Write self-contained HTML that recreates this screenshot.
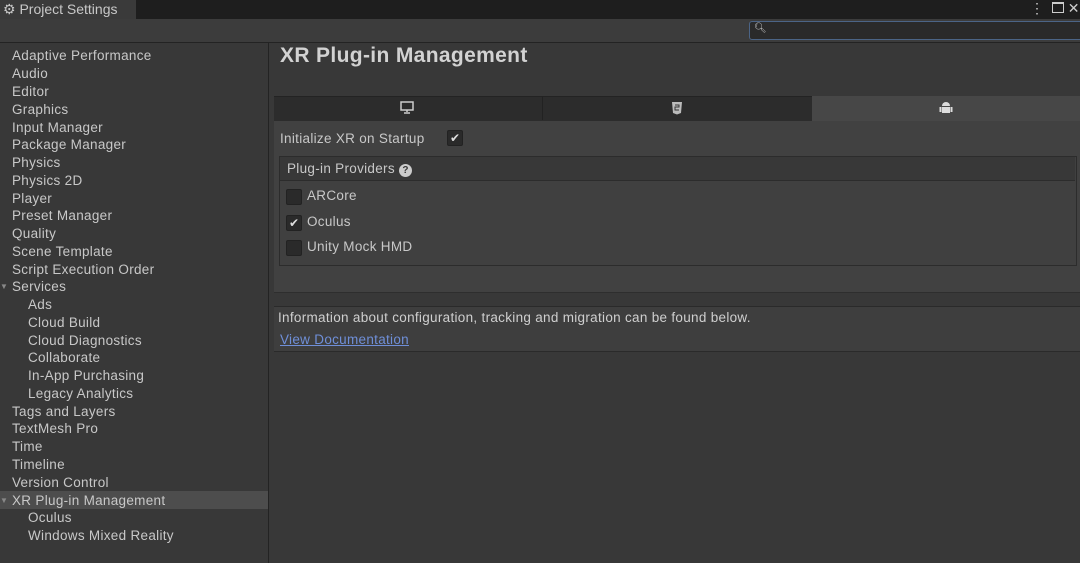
<!DOCTYPE html><html><head><style>
body{margin:0;width:1080px;height:563px;background:#383838;font-family:"Liberation Sans",sans-serif;color:#c8c8c8;position:relative;overflow:hidden;font-size:13.5px;letter-spacing:0.3px}
.a{position:absolute;white-space:nowrap}
.it{position:absolute;left:12px;font-size:13.5px;line-height:18px;white-space:nowrap}
.cb{position:absolute;width:14px;height:14px;background:#2a2a2a;border:1px solid #222;border-radius:2px;letter-spacing:0}
</style></head><body>
<div class="a" style="left:0;top:0;width:1080px;height:19px;background:#1e1e1e"></div>
<div class="a" style="left:0;top:0;width:136px;height:19px;background:#3a3a3a"></div>
<div class="a" style="left:3px;top:0;line-height:19px;font-size:14px;color:#c8c8c8;letter-spacing:0">⚙ Project Settings</div>
<div class="a" style="left:1030px;top:0;line-height:16px;font-size:14px;color:#ccc;letter-spacing:0">⋮ <span style="display:inline-block;width:10px;height:8px;border:1px solid #ccc;border-top-width:2px;margin-left:4px"></span> ✕</div>
<div class="a" style="left:0;top:19px;width:1080px;height:23px;background:#3c3c3c;border-bottom:1px solid #232323"></div>
<div class="a" style="left:749px;top:21px;width:340px;height:17px;background:#2a2a2a;border:1px solid #4b6486;border-radius:3px"></div>
<div class="a" style="left:754px;top:23px;font-size:10px;color:#ccc">🔍︎</div>
<div class="a" style="left:268px;top:43px;width:1px;height:520px;background:#232323"></div>
<div class="a" style="left:0;top:491px;width:268px;height:18px;background:#4d4d4d"></div>
<div class="it" style="top:47px">Adaptive Performance</div>
<div class="it" style="top:65px">Audio</div>
<div class="it" style="top:83px">Editor</div>
<div class="it" style="top:101px">Graphics</div>
<div class="it" style="top:119px">Input Manager</div>
<div class="it" style="top:136px">Package Manager</div>
<div class="it" style="top:154px">Physics</div>
<div class="it" style="top:172px">Physics 2D</div>
<div class="it" style="top:190px">Player</div>
<div class="it" style="top:207px">Preset Manager</div>
<div class="it" style="top:225px">Quality</div>
<div class="it" style="top:243px">Scene Template</div>
<div class="it" style="top:261px">Script Execution Order</div>
<div class="it" style="top:278px">Services</div>
<div class="it" style="top:278px;left:0;font-size:8px;color:#888">▼</div>
<div class="it" style="top:296px;left:28px">Ads</div>
<div class="it" style="top:314px;left:28px">Cloud Build</div>
<div class="it" style="top:332px;left:28px">Cloud Diagnostics</div>
<div class="it" style="top:349px;left:28px">Collaborate</div>
<div class="it" style="top:367px;left:28px">In-App Purchasing</div>
<div class="it" style="top:385px;left:28px">Legacy Analytics</div>
<div class="it" style="top:403px">Tags and Layers</div>
<div class="it" style="top:420px">TextMesh Pro</div>
<div class="it" style="top:438px">Time</div>
<div class="it" style="top:456px">Timeline</div>
<div class="it" style="top:474px">Version Control</div>
<div class="it" style="top:492px">XR Plug-in Management</div>
<div class="it" style="top:492px;left:0;font-size:8px;color:#888">▼</div>
<div class="it" style="top:509px;left:28px">Oculus</div>
<div class="it" style="top:527px;left:28px">Windows Mixed Reality</div>
<div class="a" style="left:280px;top:44px;font-size:21px;font-weight:bold;color:#d2d2d2;letter-spacing:0.35px">XR Plug-in Management</div>
<div class="a" style="left:274px;top:96px;width:806px;height:24px;background:#2c2c2c;border-top:1px solid #232323"></div>
<div class="a" style="left:542px;top:96px;width:1px;height:24px;background:#222"></div>
<div class="a" style="left:812px;top:96px;width:268px;height:25px;background:#474747"></div>
<svg class="a" style="left:400px;top:101px" width="14" height="13"><rect x="1" y="1" width="12" height="8" fill="none" stroke="#ccc" stroke-width="1.5"/><path d="M7 9v2M4 12h6" stroke="#ccc" stroke-width="1.5"/></svg>
<svg class="a" style="left:671px;top:101px" width="12" height="14"><path d="M1 1h10l-1 11-4 1.5-4-1.5z" fill="#bbb"/><path d="M4 4h4v2H4v3h4" stroke="#333" fill="none"/></svg>
<svg class="a" style="left:939px;top:100px" width="14" height="15"><path d="M3 6a4 4 0 0 1 8 0z" fill="#ddd"/><rect x="3" y="7" width="8" height="6" fill="#ddd"/><rect x="0.5" y="7" width="2" height="5" fill="#ddd"/><rect x="11.5" y="7" width="2" height="5" fill="#ddd"/></svg>
<div class="a" style="left:274px;top:121px;width:806px;height:171px;background:#414141;border-bottom:1px solid #2e2e2e"></div>
<div class="a" style="left:280px;top:131px">Initialize XR on Startup</div>
<div class="cb" style="left:447px;top:130px;color:#ddd;font-size:12px;line-height:14px;text-align:center">✔</div>
<div class="a" style="left:279px;top:156px;width:796px;height:108px;background:#404040;border:1px solid #2c2c2c"></div>
<div class="a" style="left:280px;top:157px;width:795px;height:23px;background:#383838;border-bottom:1px solid #2c2c2c"></div>
<div class="a" style="left:287px;top:161px">Plug-in Providers <span style="display:inline-block;width:13px;height:13px;border-radius:50%;background:#ccc;color:#383838;font-size:10px;font-weight:bold;text-align:center;line-height:13px;vertical-align:0px;letter-spacing:0">?</span></div>
<div class="cb" style="left:286px;top:189px"></div><div class="a" style="left:307px;top:188px">ARCore</div>
<div class="cb" style="left:286px;top:215px;color:#ddd;font-size:12px;line-height:14px;text-align:center">✔</div><div class="a" style="left:307px;top:214px">Oculus</div>
<div class="cb" style="left:286px;top:240px"></div><div class="a" style="left:307px;top:239px">Unity Mock HMD</div>
<div class="a" style="left:274px;top:306px;width:806px;height:44px;background:#3e3e3e;border-top:1px solid #2a2a2a;border-bottom:1px solid #2a2a2a"></div>
<div class="a" style="left:278px;top:310px;color:#cfcfcf">Information about configuration, tracking and migration can be found below.</div>
<div class="a" style="left:280px;top:332px;color:#6f8fd8;text-decoration:underline">View Documentation</div>
</body></html>
